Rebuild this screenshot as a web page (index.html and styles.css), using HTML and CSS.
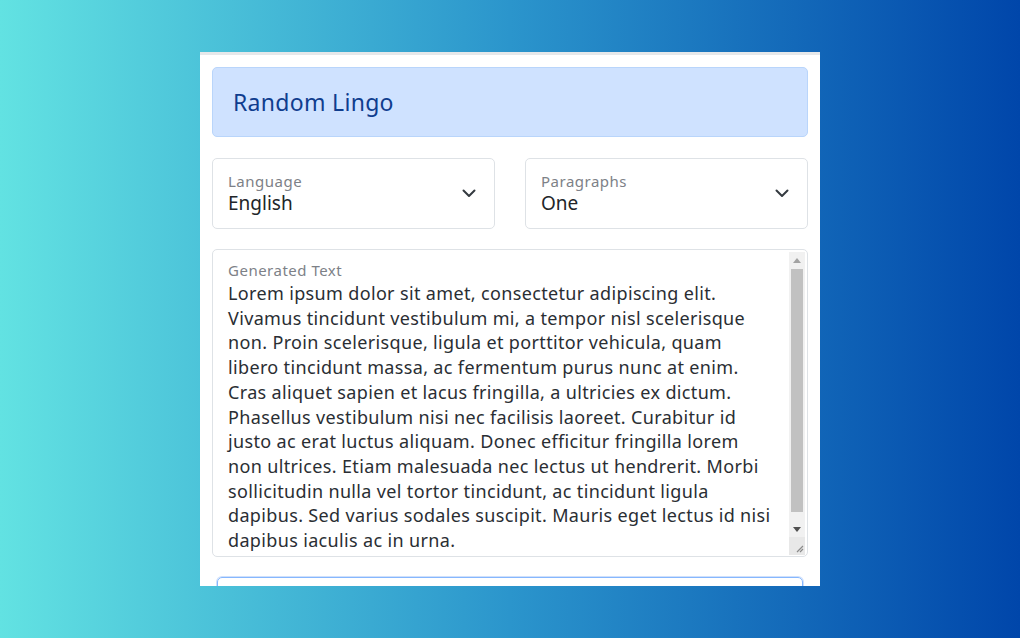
FILE: index.html
```html
<!DOCTYPE html>
<html>
<head>
<meta charset="utf-8">
<link rel="stylesheet" href="styles.css">
</head>
<body>
<div class="stage">
  <div class="panel">
    <div class="header">Random Lingo</div>
    <div class="selects">
      <div class="select">
        <div class="select-text">
          <div class="label">Language</div>
          <div class="value">English</div>
        </div>
        <svg class="chevron" width="14" height="10" viewBox="0 0 14 10"><path d="M1.5 2.5 L7 8 L12.5 2.5" fill="none" stroke="#343a40" stroke-width="2" stroke-linecap="round" stroke-linejoin="round"/></svg>
      </div>
      <div class="select">
        <div class="select-text">
          <div class="label">Paragraphs</div>
          <div class="value">One</div>
        </div>
        <svg class="chevron" width="14" height="10" viewBox="0 0 14 10"><path d="M1.5 2.5 L7 8 L12.5 2.5" fill="none" stroke="#343a40" stroke-width="2" stroke-linecap="round" stroke-linejoin="round"/></svg>
      </div>
    </div>
    <div class="textbox">
      <div class="text-area">
        <div class="label">Generated Text</div>
        <div class="lines">
          <span>Lorem ipsum dolor sit amet, consectetur adipiscing elit.</span>
          <span>Vivamus tincidunt vestibulum mi, a tempor nisl scelerisque</span>
          <span>non. Proin scelerisque, ligula et porttitor vehicula, quam</span>
          <span>libero tincidunt massa, ac fermentum purus nunc at enim.</span>
          <span>Cras aliquet sapien et lacus fringilla, a ultricies ex dictum.</span>
          <span>Phasellus vestibulum nisi nec facilisis laoreet. Curabitur id</span>
          <span>justo ac erat luctus aliquam. Donec efficitur fringilla lorem</span>
          <span>non ultrices. Etiam malesuada nec lectus ut hendrerit. Morbi</span>
          <span>sollicitudin nulla vel tortor tincidunt, ac tincidunt ligula</span>
          <span>dapibus. Sed varius sodales suscipit. Mauris eget lectus id nisi</span>
          <span>dapibus iaculis ac in urna.</span>
        </div>
      </div>
      <div class="scrollbar">
        <div class="arrow up"></div>
        <div class="track"><div class="thumb"></div></div>
        <div class="arrow down"></div>
        <div class="grip">
          <svg width="16" height="18" viewBox="0 0 16 18"><path d="M14 9 L8 15 M14 12 L11 15" stroke="#8a8a8a" stroke-width="1.2"/></svg>
        </div>
      </div>
    </div>
    <div class="bottom-box"></div>
  </div>
</div>
</body>
</html>
```
FILE: styles.css
```css
html, body {
  margin: 0;
  padding: 0;
  height: 100%;
}
body {
  background: linear-gradient(to right, #62e2e2 0%, #2b95cc 50%, #0046aa 100%);
  font-family: "Noto Sans", "Open Sans", sans-serif;
  overflow: hidden;
}
.stage {
  padding: 52px 0 0 200px;
}
.panel {
  width: 620px;
  height: 534px;
  box-sizing: border-box;
  background: #fff;
  border-top: 3px solid #e6e8ea;
  padding: 12px 12px 0 12px;
  overflow: hidden;
}
.header {
  height: 70px;
  box-sizing: border-box;
  background: #cfe2ff;
  border: 1px solid #b9d5fb;
  border-radius: 5px;
  color: #0f3d8e;
  font-size: 23px;
  letter-spacing: 0.3px;
  display: flex;
  align-items: center;
  padding-left: 20px;
}
.selects {
  display: flex;
  gap: 30px;
  margin-top: 21px;
}
.select {
  flex: 1;
  height: 71px;
  box-sizing: border-box;
  border: 1px solid #dee2e6;
  border-radius: 5px;
  display: flex;
  align-items: center;
  padding: 0 18px 0 15px;
}
.select-text {
  flex: 1;
  margin-top: 0;
}
.label {
  font-size: 15px;
  letter-spacing: 0.5px;
  color: #7d8187;
  line-height: 19px;
}
.value {
  font-size: 19px;
  color: #212529;
  line-height: 25px;
}
.chevron {
  margin-top: -1px;
}
.textbox {
  margin-top: 20px;
  height: 308px;
  box-sizing: border-box;
  border: 1px solid #dee2e6;
  border-radius: 5px;
  display: flex;
}
.text-area {
  flex: 1;
  padding: 11px 0 0 15px;
  overflow: hidden;
}
.lines {
  margin-top: 1px;
}
.lines span {
  display: block;
  white-space: nowrap;
  font-size: 18px;
  letter-spacing: 0.35px;
  color: #2a2e33;
  line-height: 24.7px;
}
.scrollbar {
  width: 16px;
  margin: 2px 2px 1px 0;
  display: flex;
  flex-direction: column;
  background: #f1f1f1;
}
.arrow {
  height: 16px;
  display: flex;
  align-items: center;
  justify-content: center;
}
.arrow::before {
  content: "";
  border-left: 4px solid transparent;
  border-right: 4px solid transparent;
}
.arrow.up::before {
  border-bottom: 5px solid #a3a3a3;
}
.arrow.down::before {
  border-top: 5px solid #505050;
}
.track {
  flex: 1;
  display: flex;
  padding: 1px 2px;
}
.thumb {
  flex: 1;
  background: #c1c1c1;
  margin-bottom: 8px;
}
.grip {
  height: 18px;
  background: #e8e8e8;
}
.grip svg {
  display: block;
}
.bottom-box {
  margin: 20px 5px 0 5px;
  height: 40px;
  border: 1px solid #86b7fe;
  border-radius: 5px;
  box-shadow: 0 0 0 1px #cfe0fb;
}
```
